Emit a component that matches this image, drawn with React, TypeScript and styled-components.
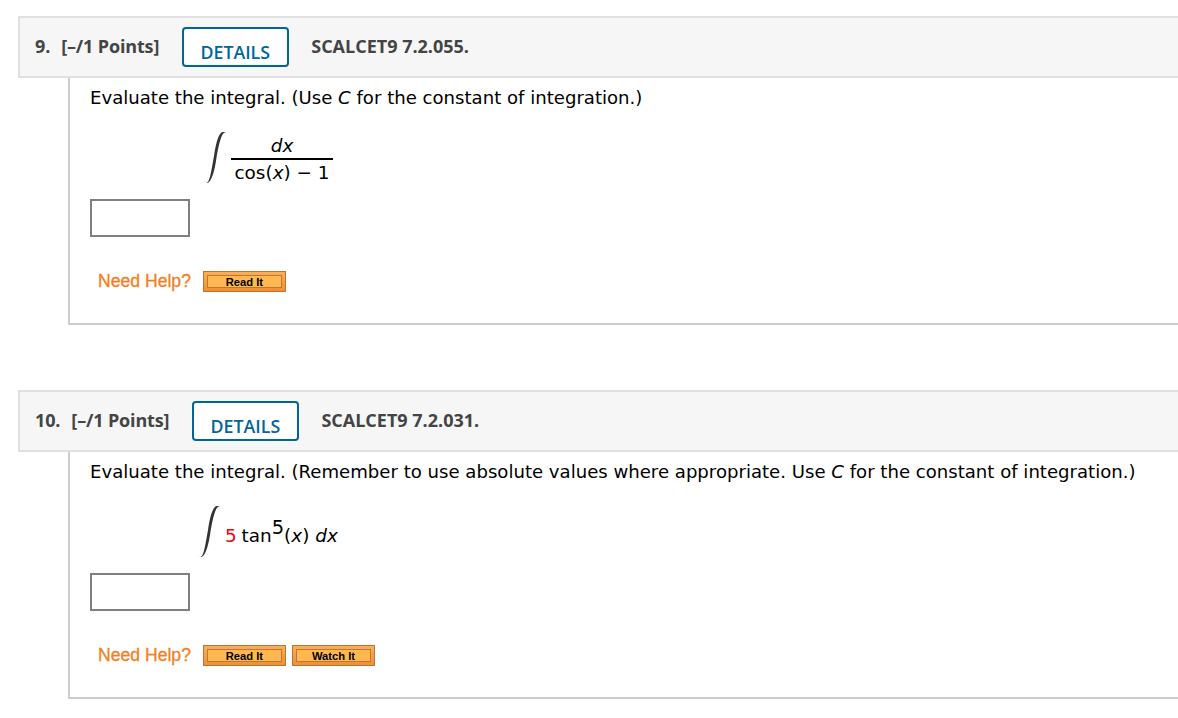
import React from "react";
import styled, { createGlobalStyle } from "styled-components";

const Global = createGlobalStyle`
  html, body { margin: 0; padding: 0; background: #fff; overflow: hidden; }
  body { font-family: "DejaVu Sans", Verdana, sans-serif; }
`;

const Page = styled.div`
  width: 1178px;
  height: 718px;
  overflow: hidden;
  padding-top: 16px;
  box-sizing: border-box;
`;

const Question = styled.section`
  margin: 0 -40px 65px 18px;
`;

const Header = styled.header`
  display: flex;
  align-items: center;
  height: 62px;
  box-sizing: border-box;
  border: 2px solid #e0e0e0;
  background: #f6f6f6;
  padding-left: 15px;
  font-family: "Open Sans", sans-serif;
  font-size: 18px;
  font-weight: 700;
  color: #444;
`;

const Points = styled.span`
  white-space: pre;
  margin-bottom: 2px;
  letter-spacing: -0.15px;
`;

const Num = styled.span`
  margin-right: 2px;
`;

const Details = styled.button`
  width: 107px;
  height: 40px;
  margin: 0 22px 0 23px;
  padding: 9px 1px 0 0;
  box-sizing: border-box;
  border: 2px solid #006699;
  border-radius: 4px;
  background: #fff;
  color: #006699;
  font-family: "Open Sans", sans-serif;
  font-size: 17.8px;
  font-weight: 600;
`;

const Code = styled.span`
  margin-bottom: 2px;
`;

const Body = styled.div`
  margin-left: 50px;
  height: 247px;
  box-sizing: border-box;
  border-left: 2px solid #ccc;
  border-bottom: 2px solid #ccc;
  padding: 8px 0 0 20px;
  display: flex;
  flex-direction: column;
  align-items: flex-start;
`;

const Prompt = styled.p`
  margin: 0;
  height: 24px;
  font-size: 18.1px;
  line-height: 24px;
  color: #000;
  white-space: nowrap;
`;

const Formula = styled.div<{ $indent: number }>`
  display: flex;
  align-items: center;
  height: 54px;
  margin-left: ${(p) => p.$indent}px;
  margin-top: 21px;
  font-size: 18.4px;
  color: #000;
`;

const Integral = styled.svg`
  width: 24px;
  height: 54px;
  flex: none;
`;

const Fraction = styled.span`
  display: inline-flex;
  flex-direction: column;
  align-items: center;
  width: 102px;
  margin-left: 3px;
  line-height: 26px;
`;

const Numerator = styled.span`
  width: 100%;
  text-align: center;
  border-bottom: 2px solid #000;
  height: 27px;
  line-height: 30px;
`;

const Denominator = styled.span`
  height: 26px;
  white-space: pre;
`;

const Inline = styled.span`
  white-space: pre;
  margin-left: 3px;
  padding-top: 6px;
`;

const Red = styled.span`
  color: #f5000a;
  margin-right: -1px;
`;

const Sup = styled.sup`
  font-size: 19.5px;
  line-height: 0;
  vertical-align: 8px;
`;

const Answer = styled.input`
  display: block;
  width: 100px;
  height: 38px;
  box-sizing: border-box;
  margin-top: 14px;
  border: 2px solid #808080;
  background: #fff;
  padding: 0;
  outline: none;
`;

const HelpRow = styled.div`
  display: flex;
  align-items: center;
  height: 21px;
  margin: 34px 0 0 8px;
`;

const HelpLabel = styled.span`
  font-family: "Liberation Sans", Arial, sans-serif;
  font-size: 17.6px;
  color: #f47e20;
  -webkit-text-stroke: 0.3px #f47e20;
  margin-right: 12px;
  white-space: nowrap;
`;

const HelpButton = styled.button`
  width: 83px;
  height: 21px;
  margin-right: 6px;
  box-sizing: border-box;
  border: 1px solid #b5763c;
  background: linear-gradient(#fcae55, #f28f30);
  display: flex;
  padding: 3px;
`;

const HelpFace = styled.span`
  flex: 1;
  display: block;
  border: 1px solid #b9793a;
  background: #ffb84f;
  color: #000;
  font-family: "Liberation Sans", Arial, sans-serif;
  font-size: 11.2px;
  font-weight: 700;
  line-height: 13px;
  text-align: center;
`;

const IntegralSign = () => (
  <Integral viewBox="0 0 24 54" aria-hidden="true">
    <path
      d="M0.5 49.5 C1 52 3 52.5 4.5 50 C6.5 46 8 36 10 25 C11.5 15 13.5 6 16.5 2.5 C18 0.8 20 0.6 21.8 1.8 C20 1.2 19 2.3 18 4.5 C15.5 10 13.5 20 12 30 C10.5 39 8.5 47 5.5 50.5 C3.5 53 1.2 52 0.5 49.5 Z"
      fill="#333"
    />
  </Integral>
);

const Help = ({ watch }: { watch?: boolean }) => (
  <HelpRow>
    <HelpLabel>Need Help?</HelpLabel>
    <HelpButton><HelpFace>Read It</HelpFace></HelpButton>
    {watch && <HelpButton><HelpFace>Watch It</HelpFace></HelpButton>}
  </HelpRow>
);

export default function App() {
  return (
    <Page>
      <Global />
      <Question>
        <Header>
          <Points><Num>9.</Num>  [–/1 Points]</Points>
          <Details>DETAILS</Details>
          <Code>SCALCET9 7.2.055.</Code>
        </Header>
        <Body>
          <Prompt>Evaluate the integral. (Use <i>C</i> for the constant of integration.)</Prompt>
          <Formula $indent={114}>
            <IntegralSign />
            <Fraction>
              <Numerator><i>dx</i></Numerator>
              <Denominator>cos(<i>x</i>) − 1</Denominator>
            </Fraction>
          </Formula>
          <Answer aria-label="answer" />
          <Help />
        </Body>
      </Question>
      <Question>
        <Header>
          <Points><Num>10.</Num>  [–/1 Points]</Points>
          <Details>DETAILS</Details>
          <Code>SCALCET9 7.2.031.</Code>
        </Header>
        <Body>
          <Prompt>Evaluate the integral. (Remember to use absolute values where appropriate. Use <i>C</i> for the constant of integration.)</Prompt>
          <Formula $indent={108}>
            <IntegralSign />
            <Inline><Red>5</Red> tan<Sup>5</Sup>(<i>x</i>) <i>dx</i></Inline>
          </Formula>
          <Answer aria-label="answer" />
          <Help watch />
        </Body>
      </Question>
    </Page>
  );
}
